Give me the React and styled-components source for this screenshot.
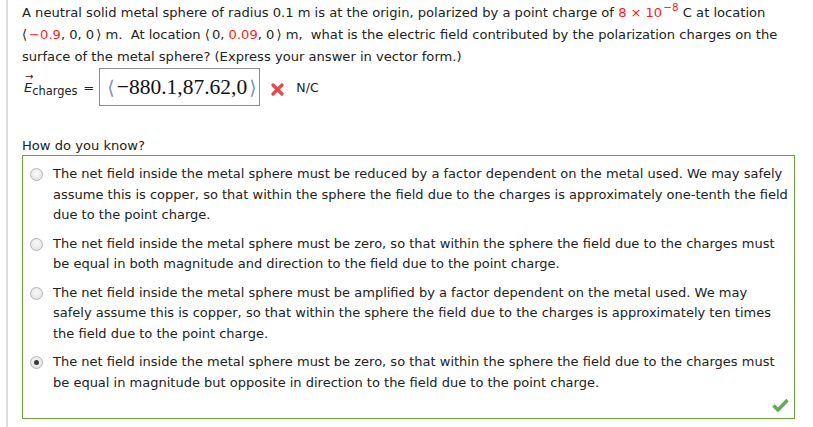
import React from 'react';
import styled, { createGlobalStyle } from 'styled-components';

const GlobalStyle = createGlobalStyle`
    body {
        margin: 0;
        background: #fff;
        font-family: 'DejaVu Sans', Verdana, sans-serif;
        color: #222;
    }
`;

const options = [
    {
        id: 'a',
        text: 'The net field inside the metal sphere must be reduced by a factor dependent on the metal used. We may safely assume this is copper, so that within the sphere the field due to the charges is approximately one-tenth the field due to the point charge.',
    },
    {
        id: 'b',
        text: 'The net field inside the metal sphere must be zero, so that within the sphere the field due to the charges must be equal in both magnitude and direction to the field due to the point charge.',
    },
    {
        id: 'c',
        text: 'The net field inside the metal sphere must be amplified by a factor dependent on the metal used. We may safely assume this is copper, so that within the sphere the field due to the charges is approximately ten times the field due to the point charge.',
    },
    {
        id: 'd',
        text: 'The net field inside the metal sphere must be zero, so that within the sphere the field due to the charges must be equal in magnitude but opposite in direction to the field due to the point charge.',
        checked: true,
    },
];

const Page = styled.div`
    margin-left: 6px;
    border-left: 2px solid #dcdcdc;
    min-height: 427px;
    padding: 2px 14px 0 14px;
    box-sizing: border-box;
    font-size: 13.1px;
`;

const Question = styled.p`
    margin: 0;
    line-height: 21.8px;
    width: 775px;
`;

const Math = styled.span`
    white-space: nowrap;
`;

const Red = styled.span`
    color: #ff1a1a;
`;

const Times = styled.span`
    margin: 0 4px;
`;

const Bracket = styled.span`
    font-family: 'DejaVu Serif', serif;
    font-size: 13px;
    padding: ${(p) => (p.$open ? '0 2px 0 0' : '0 0 0 2px')};
`;

const Sup = styled.sup`
    font-size: 10.5px;
    vertical-align: 6px;
    line-height: 0;
    margin-left: 1px;
`;

const AnswerRow = styled.div`
    display: flex;
    align-items: center;
    height: 40px;
`;

const Label = styled.span`
    display: inline-flex;
    align-items: flex-end;
    font-size: 13px;
    margin: 0 6px 0 2px;
`;

const VecE = styled.span`
    position: relative;
    font-style: italic;
    &::before {
        content: '\u2192';
        position: absolute;
        top: -9px;
        left: 1px;
        font-style: normal;
        font-size: 10px;
    }
`;

const Sub = styled.span`
    font-size: 11.4px;
    position: relative;
    top: 3px;
`;

const Eq = styled.span`
    margin-right: 5px;
`;

const AnswerBox = styled.div`
    display: flex;
    align-items: center;
    height: 38px;
    width: 161px;
    border: 1px solid #8c8c8c;
    box-sizing: border-box;
    padding: 0 0 0 5px;
    font-family: 'Liberation Serif', 'Times New Roman', serif;
    font-size: 21.5px;
    color: #111;
`;

const Angle = styled.span`
    color: #7d93b5;
    font-family: 'DejaVu Serif', serif;
    font-size: 19px;
    margin: 0 2px;
`;

const Wrong = styled.span`
    margin: 4px 12px 0 11px;
    display: inline-flex;
`;

const Unit = styled.span`
    font-size: 12.5px;
`;

const Prompt = styled.div`
    margin-top: 30px;
    line-height: 18px;
`;

const Choices = styled.div`
    width: 773px;
    height: 264px;
    box-sizing: border-box;
    border: 1px solid #6aa23d;
    padding: 8px 0 0 7px;
    position: relative;
`;

const Choice = styled.label`
    display: flex;
    gap: 10px;
    font-size: 13px;
    line-height: 20.5px;
    margin-bottom: 8px;
`;

const ChoiceText = styled.span`
    flex: 0 0 736px;
`;

const Radio = styled.span`
    flex: none;
    width: 13px;
    height: 13px;
    margin-top: 4px;
    border-radius: 50%;
    border: 1px solid #b4b4b4;
    box-sizing: border-box;
    background: radial-gradient(circle at 50% 40%, #fafafa 0%, #e6e6e6 70%, #d6d6d6 100%);
    display: flex;
    align-items: center;
    justify-content: center;
    &::after {
        content: '';
        width: 5px;
        height: 5px;
        border-radius: 50%;
        background: ${(p) => (p.$checked ? '#3a3a3a' : 'transparent')};
    }
`;

const Check = styled.span`
    position: absolute;
    right: 5px;
    bottom: 6px;
    display: inline-flex;
`;

const App = () => {
    return (
        <>
            <GlobalStyle />
            <Page>
                <Question>
                    A neutral solid metal sphere of radius 0.1 m is at the origin, polarized by a point charge of{' '}
                    <Math>
                        <Red>
                            8<Times>×</Times>10<Sup>−8</Sup>
                        </Red>
                    </Math>{' '}
                    C at location{' '}
                    <Math>
                        <Bracket $open>⟨</Bracket>
                        <Red>−0.9</Red>, 0, 0<Bracket>⟩</Bracket>
                    </Math>{' '}
                    m.&nbsp; At location{' '}
                    <Math>
                        <Bracket $open>⟨</Bracket>0, <Red>0.09</Red>, 0<Bracket>⟩</Bracket>
                    </Math>{' '}
                    m,&nbsp; what is the electric field contributed by the polarization charges on the surface of the
                    metal sphere? (Express your answer in vector form.)
                </Question>

                <AnswerRow>
                    <Label>
                        <VecE>E</VecE>
                        <Sub>charges</Sub>
                    </Label>
                    <Eq>=</Eq>
                    <AnswerBox>
                        <Angle>⟨</Angle>−880.1,87.62,0<Angle>⟩</Angle>
                    </AnswerBox>
                    <Wrong>
                        <svg width="13" height="13" viewBox="0 0 13 13">
                            <path d="M2 2 L11 11 M11 2 L2 11" stroke="#e8474c" strokeWidth="3.2" strokeLinecap="round" />
                        </svg>
                    </Wrong>
                    <Unit>N/C</Unit>
                </AnswerRow>

                <Prompt>How do you know?</Prompt>
                <Choices>
                    {options.map((o) => (
                        <Choice key={o.id}>
                            <Radio $checked={o.checked} />
                            <ChoiceText>{o.text}</ChoiceText>
                        </Choice>
                    ))}
                    <Check>
                        <svg width="17" height="14" viewBox="0 0 17 14">
                            <path d="M1.5 7.5 L6 12 L15.5 2" fill="none" stroke="#5fae4f" strokeWidth="3.4" strokeLinejoin="round" />
                        </svg>
                    </Check>
                </Choices>
            </Page>
        </>
    );
};

export default App;
